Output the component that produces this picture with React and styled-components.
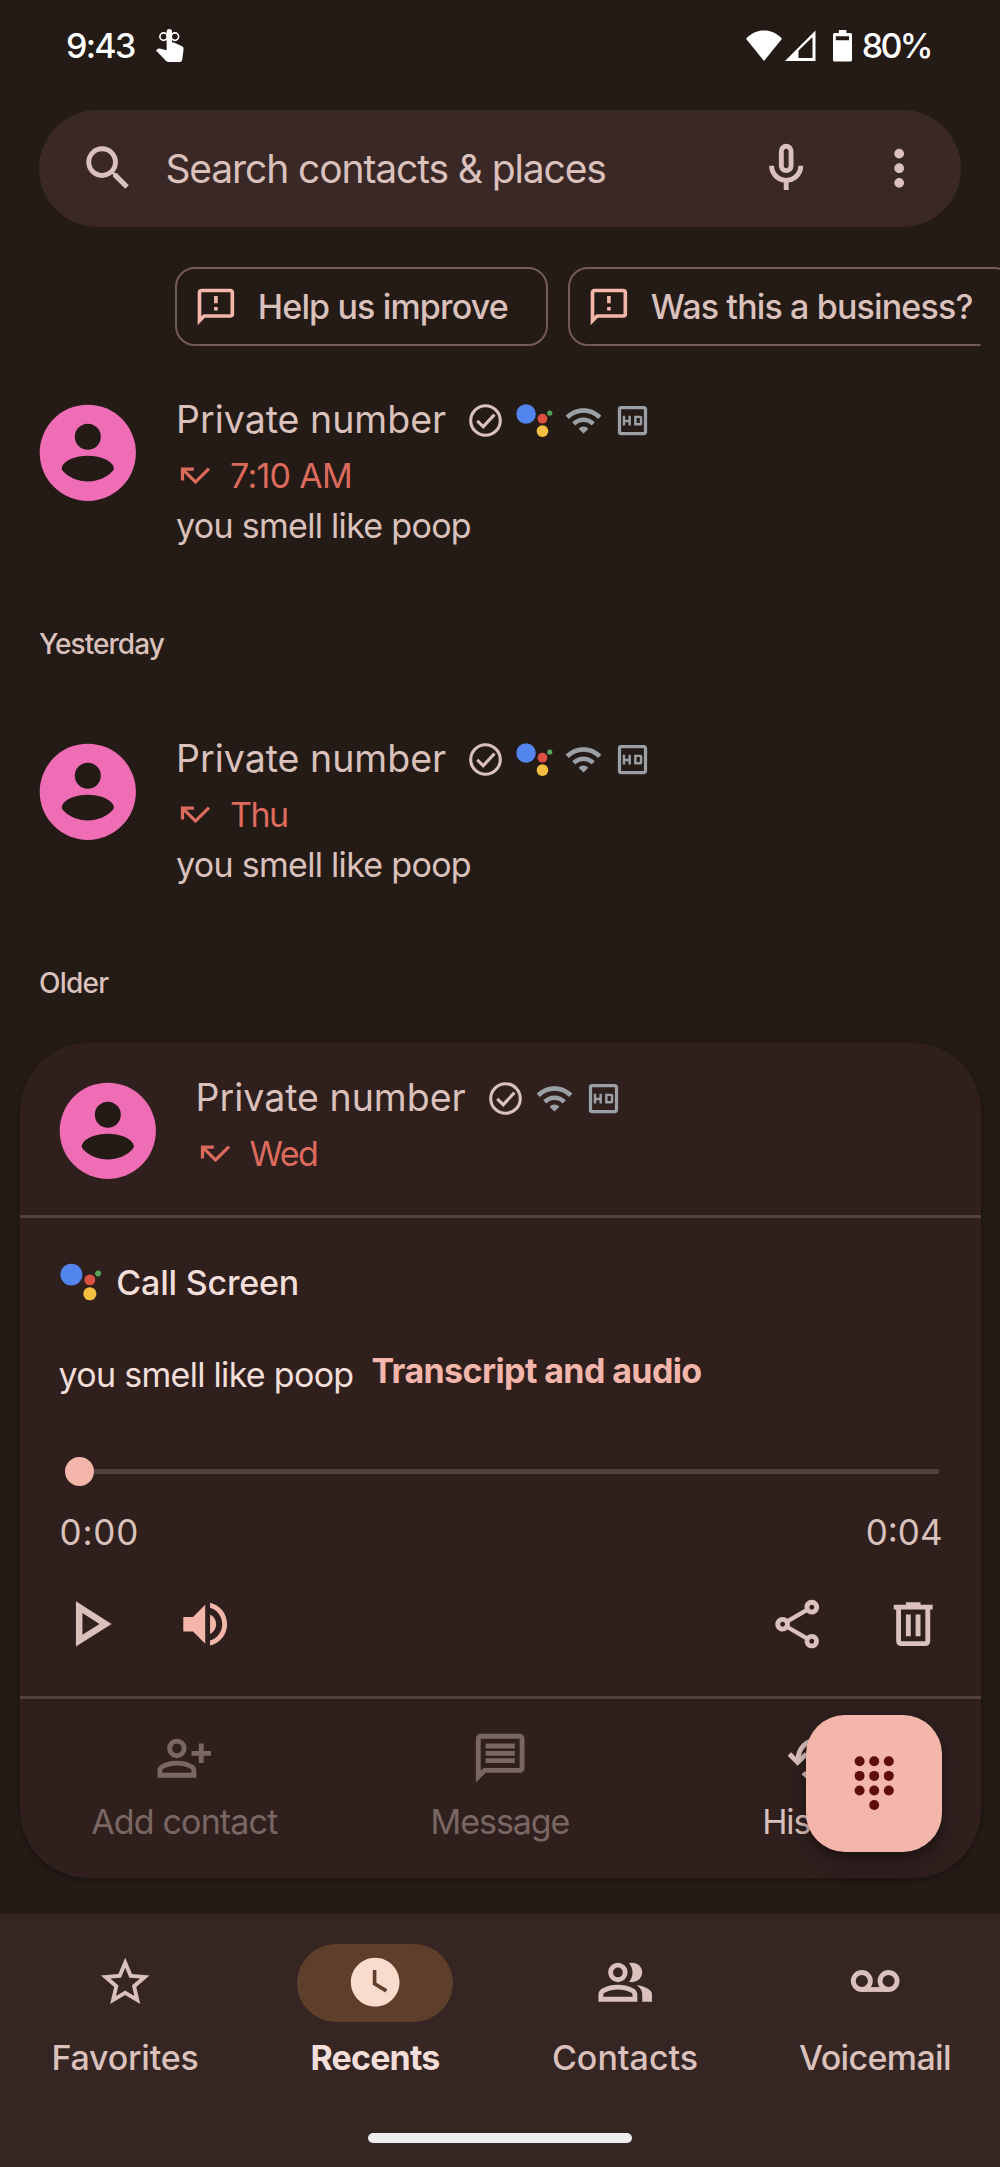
import React from 'react'
import { createGlobalStyle, css, styled } from 'styled-components'
import {
  MdCallMissed,
  MdMoreVert,
  MdOutlineFeedback,
  MdOutlineHd,
  MdOutlineMessage,
  MdOutlinePlayArrow,
  MdOutlineShare,
  MdOutlineSmsFailed,
  MdSearch,
  MdStarBorder,
  MdVolumeUp,
  MdWatchLater,
  MdWifi
} from 'react-icons/md'

const color = {
  bg: '#241a16',
  card: '#2f201e',
  search: '#3a2826',
  nav: '#352523',
  line: '#52403d',
  chip: '#725b58',
  text: '#dac1bc',
  bright: '#f3deda',
  dim: '#7a6663',
  accent: '#f4b6ab',
  missed: '#dc6b5d',
  grey: '#9aa0a6',
  pink: '#ee6db4',
  pill: '#5e3f2b'
}

const GlobalStyle = createGlobalStyle`
  * {
    box-sizing: border-box;
  }
  body {
    margin: 0;
    background: ${color.bg};
  }
  svg {
    display: block;
    flex: none;
  }
`

const Screen = styled.div`
  position: relative;
  width: 1000px;
  height: 2167px;
  overflow: hidden;
  display: flex;
  flex-direction: column;
  background: ${color.bg};
  color: ${color.text};
  font-family: 'Inter', 'Roboto', sans-serif;
`

const Text = styled.span`
  flex: none;
  white-space: pre;
  font-size: ${p => p.$size || 34}px;
  font-weight: ${p => p.$weight || 400};
  letter-spacing: ${p => p.$ls || 0}px;
  line-height: 40px;
  color: ${p => p.$color || 'inherit'};
`

const StatusBar = styled.header`
  display: flex;
  align-items: center;
  height: 51px;
  margin: 20px 69px 39px 66px;
  color: #fff;
  .hand {
    margin-left: 21px;
  }
  .wifi {
    margin-left: auto;
  }
  .signal {
    margin-left: 3px;
  }
  .battery {
    margin: 0 10px 0 17px;
  }
`

const SearchBar = styled.div`
  display: flex;
  align-items: center;
  height: 117px;
  margin: 0 39px;
  padding: 0 33px 0 40px;
  border-radius: 59px;
  background: ${color.search};
  .mic {
    margin: 0 54px 0 auto;
  }
`

const SearchText = styled(Text)`
  margin-left: 28px;
`

const Chips = styled.div`
  display: flex;
  gap: 20px;
  margin-top: 40px;
  padding-left: 175px;
`

const Chip = styled.div`
  display: flex;
  align-items: center;
  flex: none;
  gap: 20px;
  width: ${p => p.$width}px;
  height: 79px;
  padding-left: 17px;
  border: 2.4px solid ${color.chip};
  border-radius: 20px;
  ${p =>
    p.$cut &&
    css`
      clip-path: polygon(0 0, 100% 0, 100% 20px, 415px 74px, 412px 100%, 0 100%);
    `}
`

const Entry = styled.div`
  display: flex;
  gap: 40px;
  height: ${p => p.$height || 156}px;
  padding-left: 39px;
`

const FirstEntry = styled(Entry)`
  margin-top: 46px;
`

const AvatarBox = styled.div`
  padding-top: 12px;
`

const Lines = styled.div`
  display: flex;
  flex-direction: column;
`

const NameLine = styled.div`
  display: flex;
  align-items: center;
  gap: 10px;
  height: 56px;
`

const Name = styled(Text)`
  width: 280px;
`

const CallLine = styled.div`
  display: flex;
  align-items: center;
  gap: 15px;
  height: 55px;
  color: ${color.missed};
`

const NoteLine = styled.div`
  display: flex;
  align-items: center;
  height: 45px;
`

const Section = styled.h2`
  display: flex;
  height: 40px;
  margin: 76px 39px ${p => p.$gap}px;
`

const Card = styled.section`
  width: 961px;
  height: 835px;
  margin-left: 19.5px;
  padding-top: 27px;
  border-radius: 68px;
  background: ${color.card};
  box-shadow: 0 2px 5px rgba(0, 0, 0, 0.28);
`

const Divider = styled.div`
  height: 3px;
  margin-top: ${p => p.$top}px;
  background: ${color.line};
`

const ScreenTitle = styled.div`
  display: flex;
  align-items: center;
  gap: 14px;
  height: 50px;
  margin-top: 40px;
  padding-left: 39px;
  svg {
    margin-bottom: 3px;
  }
`

const Transcript = styled.div`
  display: flex;
  align-items: center;
  height: 60px;
  margin-top: 37px;
  padding-left: 39px;
`

const Link = styled.a`
  margin-left: 18px;
  padding-bottom: 9px;
  color: ${color.accent};
`

const Seek = styled.div`
  display: flex;
  align-items: center;
  margin-top: 52px;
  padding: 0 42px 0 45px;
`

const Thumb = styled.div`
  width: 29px;
  height: 29px;
  border-radius: 50%;
  background: ${color.accent};
`

const Track = styled.div`
  flex: 1;
  height: 5px;
  background: ${color.line};
`

const Times = styled.div`
  display: flex;
  justify-content: space-between;
  margin-top: 26px;
  padding: 0 38px 0 40px;
`

const Controls = styled.div`
  display: flex;
  align-items: center;
  height: 78px;
  margin-top: 33px;
  padding: 0 38px 0 30px;
  .volume {
    margin-left: 49px;
  }
  .share {
    margin: 0 58px 0 auto;
  }
`

const Actions = styled.div`
  display: flex;
  padding: 30px 7px 0;
`

const Action = styled.div`
  display: flex;
  flex: 1;
  flex-direction: column;
  align-items: center;
  gap: 15px;
  color: ${p => (p.$off ? color.dim : color.text)};
`

const Fab = styled.button`
  position: absolute;
  left: 805.5px;
  top: 1715px;
  display: flex;
  align-items: center;
  justify-content: center;
  width: 136.5px;
  height: 136.5px;
  padding: 0;
  border: 0;
  border-radius: 39px;
  background: ${color.accent};
  color: #5f0d08;
  box-shadow: 0 10px 20px rgba(0, 0, 0, 0.26), 0 3px 7px rgba(0, 0, 0, 0.22);
`

const Nav = styled.nav`
  display: flex;
  flex-direction: column;
  align-items: center;
  height: 253px;
  margin-top: auto;
  background: ${color.nav};
`

const Tabs = styled.div`
  display: flex;
  width: 100%;
  padding-top: 30px;
`

const Tab = styled.div`
  display: flex;
  flex: 1;
  flex-direction: column;
  align-items: center;
  gap: 16px;
  color: ${p => (p.$active ? color.bright : color.text)};
`

const Pill = styled.div`
  display: flex;
  align-items: center;
  justify-content: center;
  width: 156px;
  height: 78px;
  padding-bottom: 2px;
  border-radius: 39px;
  background: ${p => (p.$active ? color.pill : 'transparent')};
  color: ${p => (p.$active ? '#fadccd' : 'inherit')};
`

const HomeBar = styled.div`
  width: 264px;
  height: 10.5px;
  margin-top: 54.5px;
  border-radius: 6px;
  background: #ededed;
`

// 24-unit glyphs
const Icon = ({ size = 58.4, d, className, children }) => (
  <svg className={className} width={size} height={size} viewBox='0 0 24 24' fill='currentColor'>
    {d && <path d={d} />}
    {children}
  </svg>
)

const paths = {
  mic: 'M12 14q-1.25 0-2.125-.875T9 11V5q0-1.25.875-2.125T12 2t2.125.875T15 5v6q0 1.25-.875 2.125T12 14m-1 7v-3.075q-2.6-.35-4.3-2.325T5 11h2q0 2.075 1.463 3.538T12 16t3.538-1.463T17 11h2q0 2.625-1.7 4.6T13 17.925V21zm1-9q.425 0 .713-.288T13 11V5q0-.425-.288-.712T12 4t-.712.288T11 5v6q0 .425.288.713T12 12',
  trash:
    'M7 21q-.825 0-1.412-.587T5 19V6H4V4h5V3h6v1h5v2h-1v13q0 .825-.587 1.413T17 21zM17 6H7v13h10zM9 17h2V8H9zm4 0h2V8h-2z',
  personAdd:
    'M18 14v-3h-3V9h3V6h2v3h3v2h-3v3zm-9-2q-1.65 0-2.825-1.175T5 8t1.175-2.825T9 4t2.825 1.175T13 8t-1.175 2.825T9 12m-8 8v-2.8q0-.85.438-1.562T2.6 14.55q1.55-.775 3.15-1.162T9 13t3.25.388t3.15 1.162q.725.375 1.163 1.088T17 17.2V20zm2-2h12v-.8q0-.275-.137-.5t-.363-.35q-1.35-.675-2.725-1.012T9 15t-2.775.338T3.5 16.35q-.225.125-.363.35T3 17.2zm6-8q.825 0 1.413-.587T11 8t-.587-1.412T9 6t-1.412.588T7 8t.588 1.413T9 10',
  group:
    'M1 20v-2.8q0-.85.438-1.562T2.6 14.55q1.55-.775 3.15-1.162T9 13t3.25.388t3.15 1.162q.725.375 1.163 1.088T17 17.2V20zm18 0v-3q0-1.1-.612-2.113T16.65 13.15q1.275.15 2.4.513t2.1.887q.9.5 1.375 1.112T23 17v3zM9 12q-1.65 0-2.825-1.175T5 8t1.175-2.825T9 4t2.825 1.175T13 8t-1.175 2.825T9 12m10-4q0 1.65-1.175 2.825T15 12q-.275 0-.7-.062t-.7-.138q.675-.8 1.037-1.775T15 8t-.362-2.025T13.6 4.2q.35-.125.7-.163T15 4q1.65 0 2.825 1.175T19 8M3 18h12v-.8q0-.275-.137-.5t-.363-.35q-1.35-.675-2.725-1.012T9 15t-2.775.338T3.5 16.35q-.225.125-.363.35T3 17.2zm6-8q.825 0 1.413-.587T11 8t-.587-1.412T9 6t-1.412.588T7 8t.588 1.413T9 10'
}

const CheckCircle = () => (
  <svg width='39' height='39' viewBox='0 0 24 24' fill='none' stroke='currentColor' strokeWidth='1.9'>
    <circle cx='12' cy='12' r='9.1' />
    <path d='M6.9 12.2l3.7 3.6 6.9-7.4' />
  </svg>
)

const Assistant = ({ size = 39 }) => (
  <svg width={size} height={size} viewBox='0 0 24 24'>
    <circle cx='6.8' cy='8' r='6' fill='#5385ee' />
    <circle cx='16.9' cy='10.9' r='3' fill='#dc5041' />
    <circle cx='16.9' cy='18.5' r='3.6' fill='#f4bf41' />
    <circle cx='21.4' cy='7.4' r='1.6' fill='#57a55c' />
  </svg>
)

const Voicemail = () => (
  <Icon>
    <g fill='none' stroke='currentColor' strokeWidth='2'>
      <circle cx='6.5' cy='11.5' r='3.5' />
      <circle cx='17.5' cy='11.5' r='3.5' />
      <path d='M6.5 15h11' />
    </g>
  </Icon>
)

const History = () => (
  <Icon>
    <g fill='none' stroke='currentColor' strokeWidth='2'>
      <path d='M1.4 10.3l3.4 3.4 3.6-3.4' />
      <path d='M4.9 13C4.9 8 8.3 4.5 13 4.5a8 8 0 1 1-5.9 13.4' />
      <path d='M13 8v5l4 2.5' />
    </g>
  </Icon>
)

const Dialpad = () => {
  const dots = [3, 9, 15].flatMap(y => [6, 12, 18].map(x => [x, y]))
  return (
    <Icon>
      {[...dots, [12, 21]].map(([x, y]) => (
        <circle key={`${x}-${y}`} cx={x} cy={y} r='2.05' />
      ))}
    </Icon>
  )
}

const Avatar = () => (
  <AvatarBox>
    <svg width='97' height='97' viewBox='0 0 97 97'>
      <circle cx='48.8' cy='48.8' r='48.1' fill={color.pink} />
      <circle cx='48.8' cy='32.7' r='13' fill={color.bg} />
      <path
        d='M22.8 63.500C24.800 56 37.300 51.800 48.800 51.800S72.800 56 74.800 63.500Q75.300 65 74.100 66.500C68.300 73.500 58.300 77.500 48.800 77.500S29.300 73.500 23.500 66.500Q22.300 65 22.800 63.500Z'
        fill={color.bg}
      />
    </svg>
  </AvatarBox>
)

const Status = () => (
  <StatusBar>
    <Text $weight={500} $ls={-1.7}>
      9:43
    </Text>
    <svg className='hand' width='29' height='34' viewBox='0 0 29 34' fill='#fff'>
      <path d='M10.600 2.700a2.700 2.700 0 0 1 5.400 0V13.500h2l8 3.800q2 1 1.600 3l-1.400 10.500q-.4 2.200-2.400 2.200H12.500q-1.400 0-2.400-1L0 21.500l1.500-1.500q.8-.7 2-.4l7.100 1.600z' />
      <circle cx='7.600' cy='7.600' r='3.700' fill='none' stroke='#fff' strokeWidth='1.700' />
      <circle cx='18.900' cy='7.600' r='3.700' fill='none' stroke='#fff' strokeWidth='1.700' />
    </svg>
    <svg className='wifi' width='36' height='31' viewBox='0 0 36 31' fill='#fff'>
      <path d='M18 31L0 8.800C5 3 11 .4 18 .4S31 3 36 8.800z' />
    </svg>
    <svg className='signal' width='31' height='31' viewBox='0 0 31 31' fill='#fff' fillRule='evenodd'>
      <path d='M0 31L30.500 .5V31zM13.500 28H27.500V7L13.500 20.500z' />
    </svg>
    <svg className='battery' width='19' height='32' viewBox='0 0 19 32' fill='#fff' fillRule='evenodd'>
      <path d='M5.800 0h7.600v3H17.500q1.500 0 1.500 1.500V30q0 1.500-1.500 1.500h-16Q0 31.500 0 30V4.500Q0 3 1.500 3H5.800zM2.800 6.300v4h13.200v-4z' />
    </svg>
    <Text $weight={500} $ls={-2.6}>
      80%
    </Text>
  </StatusBar>
)

const CallEntry = ({ as: Wrap = Entry, height, when, ls, note, assistant }) => (
  <Wrap $height={height}>
    <Avatar />
    <Lines>
      <NameLine>
        <Name $size={37.5}>Private number</Name>
        <CheckCircle />
        {assistant && <Assistant />}
        <MdWifi size={39} color={color.grey} />
        <MdOutlineHd size={39} color={color.grey} />
      </NameLine>
      <CallLine>
        <MdCallMissed size={39} />
        <Text $ls={ls}>{when}</Text>
      </CallLine>
      {note && (
        <NoteLine>
          <Text $ls={-0.7}>{note}</Text>
        </NoteLine>
      )}
    </Lines>
  </Wrap>
)

const tabs = [
  { label: 'Favorites', ls: -0.23, icon: <MdStarBorder size={58.4} /> },
  { label: 'Recents', ls: -0.8, icon: <MdWatchLater size={58.4} />, active: true },
  { label: 'Contacts', ls: 0, icon: <Icon d={paths.group} /> },
  { label: 'Voicemail', ls: -0.63, icon: <Voicemail /> }
]

const App = () => {
  return (
    <Screen>
      <GlobalStyle />
      <Status />
      <SearchBar>
        <MdSearch size={58.4} />
        <SearchText $size={39} $ls={-1.11}>
          Search contacts & places
        </SearchText>
        <Icon className='mic' d={paths.mic} />
        <MdMoreVert size={58.4} />
      </SearchBar>
      <Chips>
        <Chip $width={373}>
          <MdOutlineSmsFailed size={43.8} color={color.accent} />
          <Text $weight={500} $ls={-0.85}>
            Help us improve
          </Text>
        </Chip>
        <Chip $width={446} $cut>
          <MdOutlineFeedback size={43.8} color={color.accent} />
          <Text $weight={500} $ls={-0.85}>
            Was this a business?
          </Text>
        </Chip>
      </Chips>

      <CallEntry as={FirstEntry} when='7:10 AM' ls={-0.7} note='you smell like poop' assistant />
      <Section $gap={67}>
        <Text $size={28} $weight={500} $ls={-0.95}>
          Yesterday
        </Text>
      </Section>
      <CallEntry when='Thu' ls={-1.5} note='you smell like poop' assistant />
      <Section $gap={40}>
        <Text $size={28} $weight={500} $ls={-0.75}>
          Older
        </Text>
      </Section>

      <Card>
        <CallEntry when='Wed' ls={-1.5} height={111} />
        <Divider $top={34} />
        <ScreenTitle>
          <Assistant size={43.8} />
          <Text $weight={500} $ls={-0.2} $color={color.bright}>
            Call Screen
          </Text>
        </ScreenTitle>
        <Transcript>
          <Text $ls={-0.7} $color={color.bright}>
            you smell like poop
          </Text>
          <Link>
            <Text $weight={700} $ls={-0.6}>
              Transcript and audio
            </Text>
          </Link>
        </Transcript>
        <Seek>
          <Thumb />
          <Track />
        </Seek>
        <Times>
          <Text $size={35} $ls={0.8}>
            0:00
          </Text>
          <Text $size={35}>0:04</Text>
        </Times>
        <Controls>
          <MdOutlinePlayArrow size={77.8} />
          <MdVolumeUp className='volume' size={58.4} color={color.accent} />
          <MdOutlineShare className='share' size={58.4} />
          <Icon d={paths.trash} />
        </Controls>
        <Divider $top={33} />
        <Actions>
          <Action $off>
            <Icon d={paths.personAdd} />
            <Text $ls={-0.85}>Add contact</Text>
          </Action>
          <Action $off>
            <MdOutlineMessage size={58.4} />
            <Text $ls={-1.06}>Message</Text>
          </Action>
          <Action>
            <History />
            <Text $ls={-1.16}>History</Text>
          </Action>
        </Actions>
      </Card>

      <Nav>
        <Tabs>
          {tabs.map(tab => (
            <Tab key={tab.label} $active={tab.active}>
              <Pill $active={tab.active}>{tab.icon}</Pill>
              <Text $weight={tab.active ? 700 : 500} $ls={tab.ls}>
                {tab.label}
              </Text>
            </Tab>
          ))}
        </Tabs>
        <HomeBar />
      </Nav>

      <Fab aria-label='Dial pad'>
        <Dialpad />
      </Fab>
    </Screen>
  )
}

export default App
